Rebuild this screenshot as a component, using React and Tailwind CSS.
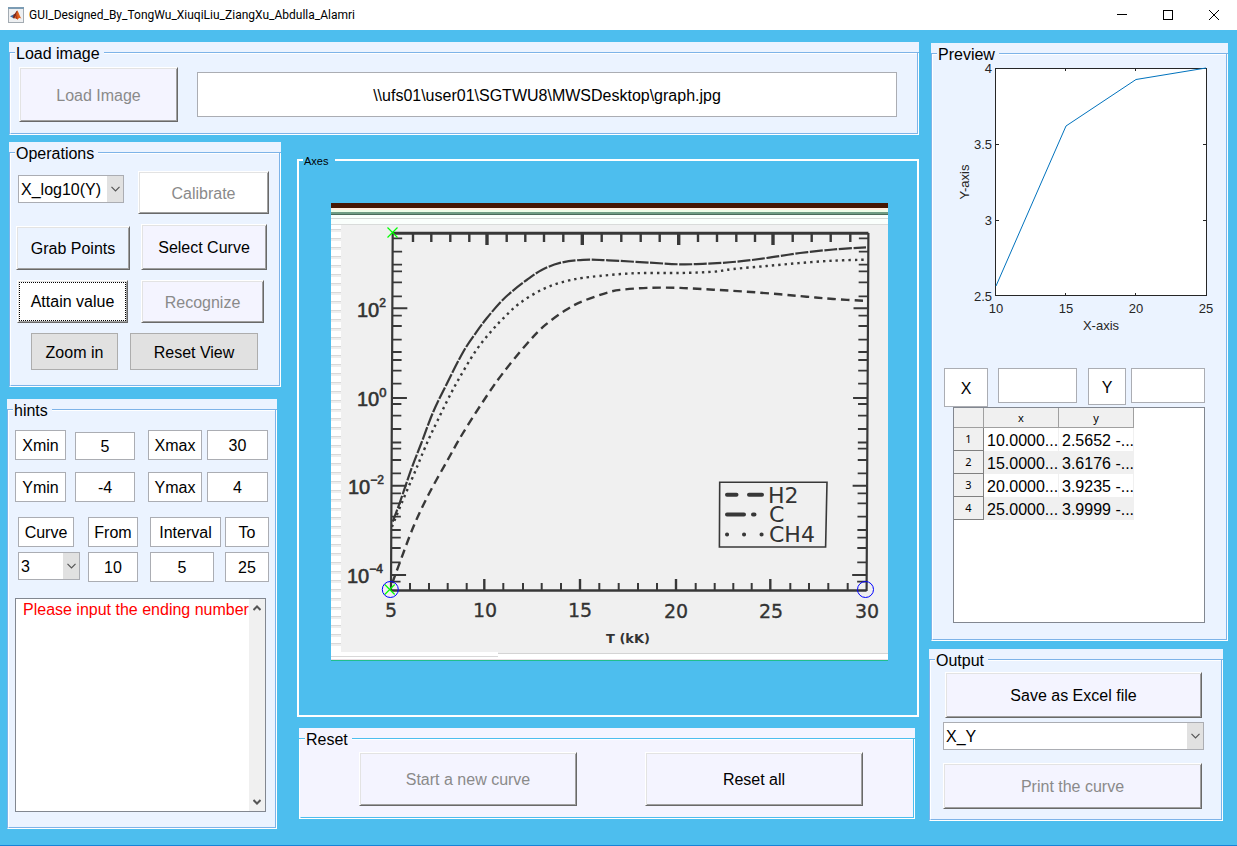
import React from "react";

const RAISED =
  "border border-t-white border-l-white border-r-[#696969] border-b-[#696969] shadow-[inset_1px_1px_0_#e3e3e3,inset_-1px_-1px_0_#a0a0a0]";

function Panel({ title, id, reset = false, className = "", children }) {
  const line = reset ? "bg-[#4dbeee]" : "bg-[#7db3e8]";
  const bg = reset ? "bg-[#f4f4ff]" : "bg-[#ebf3ff]";
  const outer = reset ? "border-l-white" : "border-l-[#7db3e8]";
  const inner = reset
    ? "border-l-[#f4f4ff] border-r-[#4dbeee] border-b-[#4dbeee]"
    : "border-l-white border-r-[#7db3e8] border-b-[#7db3e8]";
  return (
    <section aria-labelledby={id} className={`flex flex-col ${bg} ${className}`}>
      <div className="flex h-[21px] items-center">
        <span className={`h-px w-[6px] ${line} shadow-[0_1px_0_white]`} />
        <h2 id={id} className="pt-[2px] pl-px pr-1 leading-[21px]">
          {title}
        </h2>
        <span className={`h-px flex-1 ${line} shadow-[0_1px_0_white]`} />
      </div>
      <div className={`-mt-[10px] flex flex-1 flex-col border-r border-b border-l border-r-white border-b-white ${outer}`}>
        <div className={`flex flex-1 flex-col border-r border-b border-l ${inner}`}>{children}</div>
      </div>
    </section>
  );
}

function Button({ children, className = "", bg = "bg-[#f4f4ff]", pad = "pt-[2px]", disabled = false }) {
  return (
    <button
      type="button"
      disabled={disabled}
      className={`${RAISED} ${bg} ${pad} ${disabled ? "text-[#8a8a8a]" : "text-black"} ${className}`}
    >
      {children}
    </button>
  );
}

function Select({ id, label, options, className = "" }) {
  return (
    <div className={`flex h-7 border border-[#abadb3] bg-white ${className}`}>
      <select id={id} aria-label={label} className="min-w-0 flex-1 appearance-none bg-white pt-[2px] pl-[2px] outline-none">
        {options.map((o) => (
          <option key={o}>{o}</option>
        ))}
      </select>
      <span className="flex w-4 items-center justify-center bg-[#e1e1e1]">
        <svg width="9" height="6" viewBox="0 0 9 6" fill="none" stroke="#555" strokeWidth="1.2">
          <path d="M0.5 0.8 4.5 4.8 8.5 0.8" />
        </svg>
      </span>
    </div>
  );
}

const BOX = "border border-[#abadb3] bg-white pt-[2px] text-center";

function Tag({ htmlFor, className = "", children }) {
  return (
    <label htmlFor={htmlFor} className={`${BOX} flex h-[30px] items-center justify-center ${className}`}>
      {children}
    </label>
  );
}

function Field({ id, value = "", className = "" }) {
  return <input id={id} type="text" defaultValue={value} className={`${BOX} min-w-0 outline-none ${className}`} />;
}

function TitleBar() {
  return (
    <header className="flex h-[30px] items-center bg-white pl-2">
      <svg width="16" height="16" viewBox="0 0 16 16" aria-hidden="true">
        <rect x="0.5" y="0.5" width="15" height="15" fill="#eef0f2" stroke="#a3abb2" />
        <rect x="0" y="0" width="16" height="2" fill="#7c9cb4" />
        <path d="M2 9.2 5.6 7.4 8 9.2 6 11.6 4.6 10.8Z" fill="#3d6fa8" />
        <path d="M5.6 7.4C7.4 6.6 8 4.2 9.2 3.4L8.6 8.4 6 11.6 5 10.4Z" fill="#7b2a1c" />
        <path d="M9.2 3.4C10.4 4.4 11.6 9 13.6 11.6 12 10.6 10.8 10.8 9.4 12.8 8.6 11.6 7.6 11 6 11.6 8 9.8 8.4 6 9.2 3.4Z" fill="#e0601c" />
        <path d="M9.2 3.4C9 6.4 9.4 9.6 9.4 12.8 8.8 11.8 8.2 11.4 7.4 11.3 8.8 9 8.8 5.6 9.2 3.4Z" fill="#b03414" />
      </svg>
      <h1 className="flex-1 truncate pl-[5px] font-[Roboto,sans-serif] text-[12px]">
        GUI_Designed_By_TongWu_XiuqiLiu_ZiangXu_Abdulla_Alamri
      </h1>
      <button type="button" aria-label="Minimize" className="flex h-full w-[46px] items-center justify-center">
        <svg width="10" height="10" stroke="black"><path d="M0 4.5H10" /></svg>
      </button>
      <button type="button" aria-label="Maximize" className="flex h-full w-[46px] items-center justify-center">
        <svg width="10" height="10" fill="none" stroke="black"><rect x="0.5" y="0.5" width="9" height="9" /></svg>
      </button>
      <button type="button" aria-label="Close" className="flex h-full w-[46px] items-center justify-center">
        <svg width="10" height="10" stroke="black"><path d="M0 0 10 10M10 0 0 10" /></svg>
      </button>
    </header>
  );
}

const TOP_MINOR = [413, 431.3, 450.3, 469.3, 506.7, 525.3, 544, 563.3, 601.7, 621.3, 640.7, 659.7, 698, 717, 736.3, 755, 792.7, 811.7, 830.7, 850.3];
const TOP_MAJOR = [487, 582.3, 678.7, 773];
const BOTTOM_MINOR = [410, 429, 447.7, 466.7, 503.3, 523, 541.7, 561, 599.3, 618.7, 638, 657, 695.7, 714.7, 733.3, 751.7, 790.3, 809, 828.3, 847.7];
const BOTTOM_MAJOR = [484.3, 580, 676, 770.3];
const SIDE_MINOR = [238.3, 251.7, 264.7, 271.3, 282.3, 296.3, 315.7, 326, 339.7, 352, 360, 370.7, 383.7, 404, 415.7, 429, 442.5, 448.7, 460, 473.3, 493.3, 503.3, 516.7, 530, 537.7, 548, 562.3, 581.7];
const SIDE_MAJOR = [308.3, 398, 485.7, 575];

const leftX = (y) => 392.7 - ((y - 233) / 357) * 1.7;
const rightX = (y) => 868.4 - ((y - 233) / 357) * 1.8;

const CURVE_C = [
  [392.7, 521.7], [400, 502], [411.7, 468], [421, 444], [433.3, 411.7], [446.7, 384], [463.3, 351.7], [476.7, 331.7],
  [486.7, 318.3], [500, 302.7], [511.7, 291.7], [526.7, 280], [541.7, 270], [560, 262.9], [583.3, 259.8], [608.3, 260.3],
  [650, 262.7], [680, 264.3], [706.7, 263.7], [736.7, 261.7], [766.7, 258], [800, 253], [833.3, 249.5], [866, 247.3],
];
const CURVE_CH4 = [
  [392, 526.7], [401.7, 503], [415, 471.7], [424, 450], [433, 430], [451, 393.3], [464, 370], [476.7, 349.5], [490, 332.7],
  [503.3, 318.3], [520, 303], [543.3, 289], [566.7, 281], [590, 277], [633.3, 273.3], [680, 273], [713.3, 271.7],
  [733.3, 269], [766.7, 266], [800, 263], [833.3, 260.7], [864, 259.7],
];
const CURVE_H2 = [
  [392.3, 583], [398.3, 566.7], [413.3, 527], [428.3, 495], [446.7, 461.7], [463, 433], [486.7, 396], [503.3, 372.7],
  [525, 346], [543.3, 326.7], [565, 310.5], [583.3, 301], [608.3, 292.3], [623.3, 289.6], [650, 287.8], [680, 287.9],
  [713.3, 289.7], [746.7, 291.7], [780, 294.3], [806.7, 296.7], [833.3, 299], [866, 300.9],
];

function smoothPath(points) {
  const at = (i) => points[Math.max(0, Math.min(points.length - 1, i))];
  let d = `M${points[0][0]} ${points[0][1]}`;
  for (let i = 0; i < points.length - 1; i++) {
    const [p0, p1, p2, p3] = [at(i - 1), at(i), at(i + 1), at(i + 2)];
    d += `C${p1[0] + (p2[0] - p0[0]) / 6} ${p1[1] + (p2[1] - p0[1]) / 6} ${p2[0] - (p3[0] - p1[0]) / 6} ${p2[1] - (p3[1] - p1[1]) / 6} ${p2[0]} ${p2[1]}`;
  }
  return d;
}

function ScannedGraph() {
  return (
    <svg
      width="557"
      height="458"
      viewBox="331 203 557 458"
      className="h-auto max-w-full"
      role="img"
      aria-label="Species density against temperature"
      fontFamily="DejaVu Sans, sans-serif"
      fill="#333"
    >
      <defs>
        <pattern id="strip" x="331" y="225" width="10" height="9" patternUnits="userSpaceOnUse">
          <rect width="10" height="9" fill="#fff" />
          <rect width="10" height="1" y="4" fill="#d8d8d8" />
          <rect width="10" height="2" y="5" fill="#eeeeee" />
        </pattern>
      </defs>
      <rect x="331" y="203" width="557" height="458" fill="#f0f0f0" />
      <rect x="331" y="203" width="557" height="5" fill="#461703" />
      <rect x="331" y="208" width="557" height="2" fill="#ffeede" />
      <rect x="331" y="210" width="557" height="2" fill="#eefde8" />
      <rect x="331" y="212" width="557" height="2" fill="#6f9c84" />
      <rect x="331" y="214" width="557" height="1" fill="#4a6b5a" />
      <rect x="331" y="215" width="557" height="9" fill="#fafffc" />
      <rect x="331" y="218" width="557" height="1" fill="#d4d8d6" />
      <rect x="331" y="224" width="557" height="1" fill="#d9dbda" />
      <rect x="331" y="225" width="10" height="427" fill="url(#strip)" />
      <rect x="331" y="652" width="167" height="8" fill="#fff" />
      <rect x="331" y="656" width="167" height="1" fill="#d8d8d8" />
      <rect x="498" y="654" width="390" height="6" fill="#fff" />
      <rect x="498" y="653" width="390" height="1" fill="#d4d4d4" />
      <rect x="331" y="659" width="557" height="1" fill="#eadfe4" />
      <rect x="331" y="660" width="557" height="1" fill="#1fbf8c" />

      <g stroke="#383838" fill="none">
        <path d="M392.7 233.3H868.4" strokeWidth="3" />
        <path d="M391 590.5H866.6" strokeWidth="2.5" />
        <path d="M392.7 233 391 591M868.4 233 866.6 591" strokeWidth="2.2" />
        {TOP_MINOR.map((x) => <path key={x} d={`M${x} 234V242`} strokeWidth="2.4" />)}
        {TOP_MAJOR.map((x) => <path key={x} d={`M${x} 234V245`} strokeWidth="3.4" />)}
        {BOTTOM_MINOR.map((x) => <path key={x} d={`M${x} 583V590`} strokeWidth="2" />)}
        {BOTTOM_MAJOR.map((x) => <path key={x} d={`M${x} 579V590`} strokeWidth="2.4" />)}
        {SIDE_MINOR.map((y) => (
          <path key={y} d={`M${leftX(y)} ${y}h9.5M${rightX(y)} ${y}h-9.5`} strokeWidth="1.8" />
        ))}
        {SIDE_MAJOR.map((y) => (
          <path key={y} d={`M${leftX(y)} ${y}h15M${rightX(y)} ${y}h-14.5`} strokeWidth="2" />
        ))}
        <path d={smoothPath(CURVE_C)} strokeDasharray="13 1.6" strokeWidth="2.2" />
        <path d={smoothPath(CURVE_CH4)} strokeDasharray="2.4 4" strokeWidth="2.4" />
        <path d={smoothPath(CURVE_H2)} strokeDasharray="8.5 5" strokeWidth="2.4" />
        <path d="M719.7 482.3H827L825.6 547H719.4Z" strokeWidth="1.6" />
        <g strokeWidth="4" strokeLinecap="round">
          <path d="M727 494.7H736.5M749 494.7H762" />
          <path d="M727 514.5H744M753 514.5H754.5" />
          <path d="M727 534.5h.1M744 534.5h.1M761.5 534.5h.1" />
        </g>
      </g>

      <g fontSize="22">
        <text x="768" y="503">H2</text>
        <text x="769" y="522">C</text>
        <text x="769" y="542">CH4</text>
      </g>
      <g fontSize="19" textAnchor="middle" stroke="#333" strokeWidth="0.3">
        <text x="391" y="617">5</text>
        <text x="485" y="617">10</text>
        <text x="580" y="617">15</text>
        <text x="676" y="618">20</text>
        <text x="771" y="618">25</text>
        <text x="867" y="618">30</text>
      </g>
      <text x="628" y="643" fontSize="13" fontWeight="bold" textAnchor="middle">T (kK)</text>
      <g fontFamily="Liberation Sans, sans-serif" fontSize="20" stroke="#333" strokeWidth="0.6">
        <text x="357" y="317">10<tspan fontSize="12" dy="-10">2</tspan></text>
        <text x="357" y="406">10<tspan fontSize="13" dy="-9">0</tspan></text>
        <text x="348" y="494">10<tspan fontSize="12" dy="-10">−2</tspan></text>
        <text x="347" y="583">10<tspan fontSize="12" dy="-10">−4</tspan></text>
      </g>

      <g fill="none" stroke="#00ff00" strokeWidth="1.2">
        <path d="M387.5 227.5 397.5 237.5M397.5 227.5 387.5 237.5" />
        <path d="M384.7 584.5 394.7 594.5M394.7 584.5 384.7 594.5" />
      </g>
      <g fill="none" stroke="#0000ff" strokeWidth="1">
        <circle cx="390.3" cy="589.5" r="8" />
        <circle cx="865.5" cy="589.5" r="8" />
      </g>
    </svg>
  );
}

function PreviewChart() {
  return (
    <svg
      width="262"
      height="276"
      viewBox="953 60 262 276"
      role="img"
      aria-label="Preview of the curve"
      fontFamily="Liberation Sans, sans-serif"
      fontSize="13"
      fill="#262626"
    >
      <rect x="995.5" y="68.5" width="211" height="227" fill="white" stroke="#262626" />
      <path
        d="M1065.5 69v2M1135.5 69v2M1065.5 295v-2M1135.5 295v-2M996 144.5h3M996 220.5h3M1206 144.5h-3M1206 220.5h-3"
        stroke="#262626"
      />
      <polyline points="996,286 1066,126 1136,79.5 1206,68" fill="none" stroke="#0072bd" />
      <g textAnchor="end">
        <text x="992" y="73">4</text>
        <text x="992" y="149">3.5</text>
        <text x="992" y="225">3</text>
        <text x="992" y="301">2.5</text>
      </g>
      <g textAnchor="middle">
        <text x="996" y="313">10</text>
        <text x="1066" y="313">15</text>
        <text x="1136" y="313">20</text>
        <text x="1206" y="313">25</text>
        <text x="1101" y="330">X-axis</text>
        <text transform="translate(969 182) rotate(-90)">Y-axis</text>
      </g>
    </svg>
  );
}

const ROWS = [
  ["10.0000...", "2.5652 -..."],
  ["15.0000...", "3.6176 -..."],
  ["20.0000...", "3.9235 -..."],
  ["25.0000...", "3.9999 -..."],
];

function ResultTable() {
  const head = "h-5 border-r border-b border-[#a0a0a0] bg-[#f0f0f0] p-0 pt-px font-normal";
  const cell = "border-r border-[#f0f0f0] p-0 pt-[2px] pl-[3px] leading-[21px] whitespace-nowrap";
  return (
    <div className="h-[216px] border border-[#828790] bg-white">
      <table className="w-[180px] table-fixed border-separate border-spacing-0">
        <thead className="font-['Noto_Sans',sans-serif] text-[11px] leading-[18px]">
          <tr>
            <th aria-label="Row" className={`${head} w-[30px]`} />
            <th scope="col" className={head}>x</th>
            <th scope="col" className={head}>y</th>
          </tr>
        </thead>
        <tbody>
          {ROWS.map(([x, y], i) => (
            <tr key={x} className="h-[23px] odd:bg-white even:bg-[#f0f0f0]">
              <th
                scope="row"
                className="border-r border-b border-[#808080] bg-[#f0f0f0] p-0 font-['Noto_Sans',sans-serif] text-[11px] font-normal leading-[22px]"
              >
                {i + 1}
              </th>
              <td className={cell}>{x}</td>
              <td className={cell}>{y}</td>
            </tr>
          ))}
        </tbody>
      </table>
    </div>
  );
}

function Operations() {
  return (
    <Panel title="Operations" id="operations" className="ml-[2px]">
      <div className="flex flex-col gap-[10px] pt-[18px] pb-[15px]">
        <div className="flex items-start gap-[14px] pl-[7px]">
          <div className="pt-1">
            <Select label="Axis scale" options={["X_log10(Y)"]} className="w-[106px]" />
          </div>
          <Button disabled bg="bg-white" className="h-[43px] w-[131px]">Calibrate</Button>
        </div>
        <div className="flex items-end gap-[11px] pl-[5px]">
          <Button bg="bg-[#ebf3ff]" className="h-[44px] w-[114px]">Grab Points</Button>
          <Button className="h-[46px] w-[126px]">Select Curve</Button>
        </div>
        <div className="flex items-end gap-[13px] pl-[6px]">
          <Button bg="bg-white" pad="p-px" className="h-[43px] w-[111px]">
            <span className="flex h-full items-center justify-center border border-dotted border-black pt-px">Attain value</span>
          </Button>
          <Button disabled className="h-[43px] w-[123px]">Recognize</Button>
        </div>
        <div className="flex gap-3 pl-5">
          <button type="button" className="h-[37px] w-[87px] border border-[#adadad] bg-[#e1e1e1] pt-[2px]">Zoom in</button>
          <button type="button" className="h-[37px] w-[128px] border border-[#adadad] bg-[#e1e1e1] pt-[2px]">Reset View</button>
        </div>
      </div>
    </Panel>
  );
}

function Hints() {
  return (
    <Panel title="hints" id="hints" className="mr-1">
      <div className="flex flex-col pt-5 pr-[9px] pb-[15px] pl-[6px]">
        <div className="grid grid-cols-[60px_73px_59px_61px] items-end gap-y-3">
          <Tag htmlFor="xmin" className="w-[51px]">Xmin</Tag>
          <Field id="xmin" value="5" className="h-[28px] w-[60px]" />
          <Tag htmlFor="xmax" className="w-[54px]">Xmax</Tag>
          <Field id="xmax" value="30" className="h-[30px] w-[61px]" />
          <Tag htmlFor="ymin" className="w-[51px]">Ymin</Tag>
          <Field id="ymin" value="-4" className="h-[30px] w-[60px]" />
          <Tag htmlFor="ymax" className="w-[54px]">Ymax</Tag>
          <Field id="ymax" value="4" className="h-[30px] w-[61px]" />
        </div>
        <div className="grid grid-cols-[70px_62px_75px_44px] gap-y-[5px] pt-[15px] pl-[3px]">
          <Tag htmlFor="curve" className="w-[56px]">Curve</Tag>
          <Tag htmlFor="from" className="w-[50px]">From</Tag>
          <Tag htmlFor="interval" className="w-[71px]">Interval</Tag>
          <Tag htmlFor="to" className="w-[44px]">To</Tag>
          <Select id="curve" label="Curve" options={["3"]} className="w-[62px]" />
          <Field id="from" value="10" className="h-[30px] w-[50px]" />
          <Field id="interval" value="5" className="h-[30px] w-[64px]" />
          <Field id="to" value="25" className="h-[30px] w-[44px]" />
        </div>
        <div className="mt-4 flex h-[214px] border border-[#828790] bg-white">
          <textarea
            aria-label="Hint message"
            readOnly
            value="Please input the ending number"
            className="min-w-0 flex-1 resize-none overflow-hidden pl-[7px] leading-[21px] text-[#ff0000] outline-none"
          />
          <div className="flex w-4 flex-col items-center justify-between bg-[#f0f0f0] py-[6px]">
            <svg width="8" height="6" fill="none" stroke="#555" strokeWidth="2"><path d="M0.5 5 4 1.5 7.5 5" /></svg>
            <svg width="8" height="6" fill="none" stroke="#555" strokeWidth="2"><path d="M0.5 1 4 4.5 7.5 1" /></svg>
          </div>
        </div>
      </div>
    </Panel>
  );
}

function AxesPanel() {
  return (
    <section aria-labelledby="axes" className="flex flex-1 flex-col">
      <div className="flex h-3 items-center">
        <span className="h-[2px] w-[6px] bg-white" />
        <h2 id="axes" className="pt-px pr-[7px] pl-px text-[11px] leading-3">Axes</h2>
        <span className="h-[2px] flex-1 bg-white" />
      </div>
      <div className="-mt-[5px] flex flex-1 items-start justify-center border-x-2 border-b-2 border-white pt-[42px] pb-[54px] pl-[3px]">
        <ScannedGraph />
      </div>
    </section>
  );
}

export default function App() {
  return (
    <div className="flex min-h-screen flex-col border-b border-[#1883d7] bg-[#4dbeee] font-['Liberation_Sans',Arial,sans-serif] text-[16px] leading-[20px] text-black">
      <TitleBar />
      <main className="flex flex-1 items-start gap-[10px] pt-3 pr-[9px] pb-4 pl-[7px]">
        <div className="flex min-w-0 flex-1 flex-col gap-[7px]">
          <Panel title="Load image" id="load-image" className="ml-[2px]">
            <div className="flex items-center gap-[19px] pt-[14px] pr-5 pb-[11px] pl-2">
              <Button disabled className="h-[55px] w-[159px]">Load Image</Button>
              <input
                type="text"
                aria-label="Image path"
                defaultValue="\\ufs01\user01\SGTWU8\MWSDesktop\graph.jpg"
                className={`${BOX} h-[45px] min-w-0 flex-1 outline-none`}
              />
            </div>
          </Panel>
          <div className="flex gap-4">
            <div className="flex w-[274px] shrink-0 flex-col gap-3">
              <Operations />
              <Hints />
            </div>
            <div className="flex min-w-0 flex-1 flex-col gap-[11px] pt-3 pb-[10px]">
              <AxesPanel />
              <Panel title="Reset" id="reset" reset className="mr-1 ml-[2px]">
                <div className="flex gap-[68px] pt-[13px] pr-[50px] pb-[11px] pl-[58px]">
                  <Button disabled className="h-[54px] flex-1">Start a new curve</Button>
                  <Button className="h-[54px] flex-1">Reset all</Button>
                </div>
              </Panel>
            </div>
          </div>
        </div>
        <div className="flex w-[299px] shrink-0 flex-col gap-2 pt-px">
          <Panel title="Preview" id="preview" className="ml-[2px]">
            <div className="flex flex-col pt-[6px] pr-[21px] pb-4 pl-[11px]">
              <div className="-mr-[10px] flex justify-end">
                <PreviewChart />
              </div>
              <div className="flex items-start pt-8">
                <label htmlFor="x-value" className={`${BOX} flex h-[39px] w-[44px] items-center justify-center`}>X</label>
                <Field id="x-value" className="ml-[10px] h-[35px] w-[79px]" />
                <label htmlFor="y-value" className={`${BOX} ml-[11px] flex h-[37px] w-[38px] items-center justify-center`}>Y</label>
                <Field id="y-value" className="ml-[5px] h-[35px] flex-1" />
              </div>
              <div className="pl-[9px]">
                <ResultTable />
              </div>
            </div>
          </Panel>
          <Panel title="Output" id="output" className="mr-[5px]">
            <div className="flex flex-col pt-3 pr-[17px] pb-[10px] pl-3">
              <Button className="mx-[2px] h-[46px]">Save as Excel file</Button>
              <Select label="Output format" options={["X_Y"]} className="mt-1" />
              <Button disabled className="mt-[13px] mr-[2px] h-[46px]">Print the curve</Button>
            </div>
          </Panel>
        </div>
      </main>
    </div>
  );
}
